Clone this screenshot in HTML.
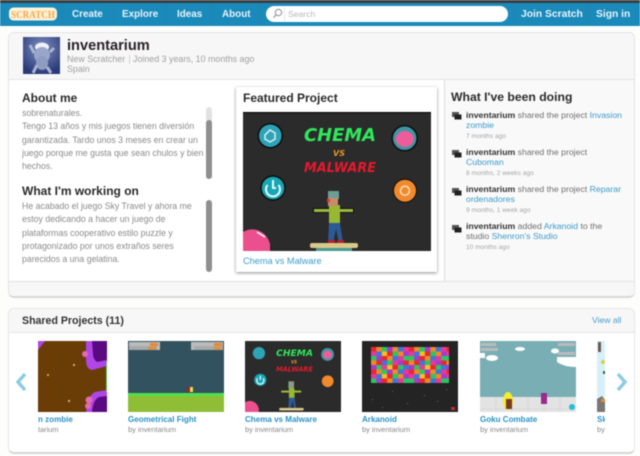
<!DOCTYPE html>
<html><head><meta charset="utf-8"><title>inventarium on Scratch</title>
<style>
html,body{margin:0;padding:0;width:640px;height:456px;overflow:hidden;background:#fdfdfb}
#r{position:absolute;left:0;top:0;width:640px;height:456px;overflow:hidden;font-family:"Liberation Sans",sans-serif;filter:blur(.45px);color:#777}
#r div,#r span.a,#r svg{position:absolute}
.t{white-space:nowrap;position:absolute}
.n{color:#e8f3f9;font-weight:bold;font-size:9.9px;top:8px;line-height:13px}
.h{color:#2a2a2a;font-weight:bold;font-size:12px;line-height:14px}
.b{font-size:8.75px;color:#8a8a8a;line-height:13px}
a{color:#3d9ccb;text-decoration:none}
.act{left:466px;width:165px;font-size:8.7px;line-height:10.4px;color:#6f6f6f;white-space:normal}
.act b{color:#333}
.act small{display:block;font-size:6.6px;color:#a5a5a5;line-height:11px}
.tt{font-weight:bold;font-size:8.05px;color:#2a93c4;line-height:10px;top:415px}
.by{font-size:7.4px;color:#888;line-height:9px;top:425px}
.sep{width:1px;background:#2484ae;top:3px;height:22px}
</style></head><body><div id="r">

<div style="left:0;top:0;width:640px;height:3px;background:#3a3d40"></div>
<div style="left:0;top:3px;width:640px;height:23px;background:#1a8abb"></div>
<div class="sep" style="left:62px"></div><div class="sep" style="left:112px"></div><div class="sep" style="left:166px"></div><div class="sep" style="left:211px"></div><div class="sep" style="left:259px"></div><div class="sep" style="left:514px"></div><div class="sep" style="left:588px"></div>

<svg style="left:8px;top:6px" width="50" height="16" viewBox="0 0 50 16">
<rect x="1" y="1.5" width="48" height="13" rx="4.5" fill="#fff2d8"/>
<text x="3" y="12" font-family="Liberation Serif,serif" font-weight="bold" font-size="10.5" fill="#f3a64a" textLength="44" lengthAdjust="spacingAndGlyphs">SCRATCH</text>
</svg>

<span class="t n" style="left:72px">Create</span>
<span class="t n" style="left:122px">Explore</span>
<span class="t n" style="left:177px">Ideas</span>
<span class="t n" style="left:222px">About</span>

<div style="left:266px;top:6px;width:242px;height:16px;background:#fff;border-radius:8px"></div>
<div style="left:284px;top:7px;width:1px;height:14px;background:#e6e6e6"></div>
<svg style="left:272px;top:8px" width="11" height="11" viewBox="0 0 11 11"><circle cx="6.5" cy="4.5" r="3.2" fill="none" stroke="#999" stroke-width="1.1"/><path d="M4.2 6.8L1.5 9.6" stroke="#999" stroke-width="1.3"/></svg>
<span class="t" style="left:288px;top:8px;font-size:8.6px;line-height:12px;color:#b8b8b8">Search</span>

<span class="t n" style="left:521px;font-size:10.3px">Join Scratch</span>
<span class="t n" style="left:596px;font-size:10.3px">Sign in</span>

<!-- profile card -->
<div style="left:8px;top:32px;width:625px;height:263px;background:#fff;border:1px solid #e4e4e4;border-bottom:2px solid #d8d8d8;border-radius:6px;overflow:hidden">
  <div style="left:0;top:0;width:625px;height:46px;background:#f7f7f7;border-bottom:1px solid #e4e4e4"></div>
  <div style="left:435px;top:47px;width:190px;height:201px;background:#f9f9f9;border-left:1px solid #dedede"></div>
  <div style="left:0;top:248px;width:625px;height:15px;background:#f7f7f7;border-top:1px solid #e2e2e2"></div>
</div>

<svg style="left:23px;top:37px" width="37" height="37" viewBox="0 0 37 37">
<defs><radialGradient id="g" cx=".5" cy=".3" r=".7"><stop offset="0" stop-color="#7f8fc2"/><stop offset="1" stop-color="#2a3a78"/></radialGradient></defs>
<rect width="37" height="37" fill="url(#g)"/>
<ellipse cx="19" cy="10" rx="7" ry="4.5" fill="#eef1f9"/>
<ellipse cx="19" cy="18" rx="8" ry="8" fill="#9aa5ca"/>
<ellipse cx="19" cy="26" rx="6" ry="7" fill="#8f9cc2"/>
<path d="M11 16L7 8M27 15L31 11M14 28L10 36M24 30L28 36" stroke="#aab5d3" stroke-width="3"/>
</svg>

<span class="t" style="left:67px;top:37px;font-weight:bold;font-size:14.6px;line-height:18px;color:#2a2228">inventarium</span>
<span class="t" style="left:67px;top:54px;font-size:8.9px;line-height:11px;color:#a0a0a0">New Scratcher</span>
<div style="left:129px;top:55px;width:1px;height:9px;background:#d8d8d8"></div>
<span class="t" style="left:133px;top:54px;font-size:8.9px;line-height:11px;color:#a0a0a0">Joined 3 years, 10 months ago</span>
<span class="t" style="left:67px;top:64px;font-size:8.9px;line-height:11px;color:#a0a0a0">Spain</span>

<!-- about -->
<span class="t h" style="left:22px;top:91px">About me</span>
<span class="t b" style="left:22px;top:107px">sobrenaturales.</span>
<span class="t b" style="left:22px;top:120px">Tengo 13 años y mis juegos tienen diversión</span>
<span class="t b" style="left:22px;top:134px">garantizada. Tardo unos 3 meses en crear un</span>
<span class="t b" style="left:22px;top:147px">juego porque me gusta que sean chulos y bien</span>
<span class="t b" style="left:22px;top:160px">hechos.</span>
<div style="left:206px;top:107px;width:6px;height:72px;background:#e2e2e2;border-radius:3px"></div>
<div style="left:206px;top:120px;width:6px;height:59px;background:#8f8f8f;border-radius:3px"></div>

<span class="t h" style="left:22px;top:184px">What I'm working on</span>
<span class="t b" style="left:22px;top:200px">He acabado el juego Sky Travel y ahora me</span>
<span class="t b" style="left:22px;top:213px">estoy dedicando a hacer un juego de</span>
<span class="t b" style="left:22px;top:227px">plataformas cooperativo estilo puzzle y</span>
<span class="t b" style="left:22px;top:240px">protagonizado por unos extraños seres</span>
<span class="t b" style="left:22px;top:253px">parecidos a una gelatina.</span>
<div style="left:206px;top:200px;width:6px;height:72px;background:#8f8f8f;border-radius:3px"></div>

<!-- featured -->
<div style="left:236px;top:87px;width:201px;height:185px;background:#fff;box-shadow:0 1px 3px rgba(0,0,0,.45)"></div>
<span class="t h" style="left:243px;top:91px">Featured Project</span>
<svg style="left:243px;top:112px" width="188" height="139" viewBox="0 0 188 139">
<rect width="188" height="139" fill="#2b2b2b"/>
<rect width="188" height="1" fill="#000"/>
<circle cx="27.3" cy="23.7" r="12" fill="#2ea3b5" stroke="#0d0d0d" stroke-width="1.5"/><path d="M22 23l5-5 5 3v6l-5 3-5-3z" fill="none" stroke="#cfeef2" stroke-width="1.6"/>
<circle cx="161.7" cy="26.3" r="12.5" fill="#3d97a3" stroke="#0d0d0d" stroke-width="1.5"/><ellipse cx="161.7" cy="27" rx="9" ry="8" fill="#ee5d9a"/>
<circle cx="30" cy="76" r="12" fill="#18a6b5" stroke="#0d0d0d" stroke-width="1.5"/><path d="M24.5 73a7 7 0 1 0 11 0M30 68v8h3" fill="none" stroke="#e8fbfd" stroke-width="2"/>
<circle cx="162" cy="78.7" r="11.5" fill="#f08a2c" stroke="#0d0d0d" stroke-width="1"/><circle cx="162" cy="78.7" r="4.5" fill="none" stroke="#fbd9b5" stroke-width="1.6"/>
<text x="61" y="29" font-family="DejaVu Sans,sans-serif" font-weight="bold" font-style="italic" font-size="17.5" fill="#2fe85d" textLength="72" lengthAdjust="spacingAndGlyphs">CHEMA</text>
<text x="96" y="44" text-anchor="middle" font-family="DejaVu Sans,sans-serif" font-weight="bold" font-style="italic" font-size="8" fill="#e8962c">VS</text>
<text x="61" y="60" font-family="DejaVu Sans,sans-serif" font-weight="bold" font-style="italic" font-size="13" fill="#e8182c" textLength="72" lengthAdjust="spacingAndGlyphs">MALWARE</text>
<path d="M0 139v-19q7-4 14-2q10 3 13 14v7z" fill="#ec4f8e"/>
<path d="M14 120l8 5" stroke="#fff" stroke-width="1.5"/>
<rect x="70" y="96" width="41" height="5" fill="#111"/><rect x="71" y="97" width="39" height="3" fill="#9bb93e"/>
<rect x="86" y="93" width="11" height="19" fill="#98b733"/>
<rect x="85" y="79" width="11" height="8" fill="#6d9d94"/><rect x="85" y="86" width="10" height="8" fill="#c98a6a"/><rect x="84" y="87" width="3" height="3" fill="#d2402c"/>
<path d="M86 111h11l3 20h-4l-3-14-3 14h-5z" fill="#2c5a96"/>
<rect x="85" y="128" width="7" height="4" fill="#b51e2c"/><rect x="94" y="128" width="7" height="4" fill="#b51e2c"/>
<rect x="67" y="131" width="48" height="5" rx="2" fill="#d9c888"/>
<rect x="73" y="136" width="36" height="3" fill="#4a9a92"/>
</svg>
<span class="t" style="left:243px;top:255px;font-size:9.2px;line-height:12px;color:#3d9ccb">Chema vs Malware</span>

<!-- activity -->
<span class="t" style="left:451px;top:90px;font-weight:bold;font-size:12.2px;line-height:15px;color:#2a2a2a">What I've been doing</span>
<svg style="left:452px;top:112px" width="10" height="8" viewBox="0 0 10 8"><rect x="0" y="0" width="7" height="5" fill="#555"/><rect x="2.5" y="2.5" width="7" height="5" fill="#222"/></svg>
<svg style="left:452px;top:150px" width="10" height="8" viewBox="0 0 10 8"><rect x="0" y="0" width="7" height="5" fill="#555"/><rect x="2.5" y="2.5" width="7" height="5" fill="#222"/></svg>
<svg style="left:452px;top:188px" width="10" height="8" viewBox="0 0 10 8"><rect x="0" y="0" width="7" height="5" fill="#555"/><rect x="2.5" y="2.5" width="7" height="5" fill="#222"/></svg>
<svg style="left:452px;top:225px" width="10" height="8" viewBox="0 0 10 8"><rect x="0" y="0" width="7" height="5" fill="#555"/><rect x="2.5" y="2.5" width="7" height="5" fill="#222"/></svg>
<div class="act" style="top:110px"><b>inventarium</b> shared the project <a>Invasion zombie</a><small>7 months ago</small></div>
<div class="act" style="top:147px"><b>inventarium</b> shared the project<br><a>Cuboman</a><small>8 months, 2 weeks ago</small></div>
<div class="act" style="top:184px"><b>inventarium</b> shared the project <a>Reparar ordenadores</a><small>9 months, 1 week ago</small></div>
<div class="act" style="top:221px"><b>inventarium</b> added <a>Arkanoid</a> to the<br>studio <a>Shenron's Studio</a><small>10 months ago</small></div>

<!-- shared card -->
<div style="left:8px;top:308px;width:625px;height:143px;background:#fff;border:1px solid #e6e6e6;border-bottom:2px solid #d6d6d6;border-radius:6px;overflow:hidden">
 <div style="left:0;top:0;width:625px;height:23px;background:#f7f7f7;border-bottom:1px solid #e4e4e4"></div>
</div>
<span class="t h" style="left:22px;top:314px;font-size:10.6px;color:#333">Shared Projects (11)</span>
<span class="t" style="left:592px;top:314px;font-size:8.6px;line-height:13px;color:#4a9fc8">View all</span>

<svg style="left:15px;top:372px" width="13" height="20" viewBox="0 0 13 20"><path d="M10 2L3 10l7 8" fill="none" stroke="#8ccbe6" stroke-width="3.4"/></svg>
<svg style="left:615px;top:372px" width="13" height="20" viewBox="0 0 13 20"><path d="M3 2l7 8-7 8" fill="none" stroke="#8ccbe6" stroke-width="3.4"/></svg>

<!-- thumb 1 -->
<svg style="left:38px;top:341px" width="69" height="71" viewBox="0 0 69 71">
<rect width="69" height="71" fill="#6a3c06"/>
<path d="M48 0h21v25l-15 4q-6-1-6-10z" fill="#b045e8"/><path d="M54 0h15v19l-10 2q-4-3-4-8z" fill="#5a0a80"/>
<path d="M0 0h7l-7 9z" fill="#b045e8"/>
<path d="M69 49l-12 2q-7 3-9 20h21z" fill="#b045e8"/><path d="M69 55l-8 1q-6 3-7 15h15z" fill="#5a0a80"/>
<circle cx="47" cy="13" r="3" fill="#e56bb0"/><circle cx="51" cy="59" r="3.5" fill="#e56bb0"/><circle cx="50" cy="65" r="3" fill="#e56bb0"/>
<rect x="35" y="23" width="2" height="2" fill="#d8a090"/><rect x="9" y="33" width="2" height="2" fill="#d8a040"/><rect x="30" y="59" width="2" height="2" fill="#e0a890"/>
<rect x="68" y="21" width="1" height="30" fill="#49d060"/>
</svg>
<span class="t tt" style="left:38px">n zombie</span>
<span class="t by" style="left:38px">tarium</span>

<!-- thumb 2 -->
<svg style="left:128px;top:341px" width="96" height="71" viewBox="0 0 96 71">
<rect width="96" height="71" fill="#33525f"/>
<rect y="52" width="96" height="19" fill="#8fbe36"/><rect y="52" width="96" height="3" fill="#4fe04f"/>
<rect x="1" y="1" width="31" height="8" fill="#bbb"/><rect x="22" y="2" width="8" height="3" fill="#e88a2c"/><rect x="1" y="5" width="28" height="4" fill="#aaa"/><rect x="20" y="6" width="8" height="2.5" fill="#e88a2c"/>
<rect x="63" y="1" width="32" height="8" fill="#bbb"/><rect x="86" y="2" width="8" height="3" fill="#e88a2c"/><rect x="66" y="5" width="29" height="4" fill="#aaa"/><rect x="86" y="6" width="7" height="2.5" fill="#e88a2c"/>
<rect x="59" y="46" width="3" height="5" fill="#a02030"/><rect x="62" y="46" width="3" height="5" fill="#e8e040"/>
</svg>
<span class="t tt" style="left:128px">Geometrical Fight</span>
<span class="t by" style="left:128px">by inventarium</span>

<!-- thumb 3 -->
<svg style="left:245px;top:341px" width="96" height="71" viewBox="0 0 188 139">
<rect width="188" height="139" fill="#2b2b2b"/>
<circle cx="27.3" cy="23.7" r="12" fill="#2ea3b5"/>
<circle cx="161.7" cy="26.3" r="12.5" fill="#3d97a3"/><ellipse cx="161.7" cy="27" rx="9" ry="8" fill="#ee5d9a"/>
<circle cx="30" cy="76" r="12" fill="#18a6b5"/><path d="M24.5 73a7 7 0 1 0 11 0M30 68v8" fill="none" stroke="#e8fbfd" stroke-width="2.4"/>
<circle cx="162" cy="78.7" r="11.5" fill="#f08a2c"/>
<text x="61" y="29" font-family="DejaVu Sans,sans-serif" font-weight="bold" font-style="italic" font-size="17.5" fill="#2fe85d" textLength="72" lengthAdjust="spacingAndGlyphs">CHEMA</text>
<text x="96" y="44" text-anchor="middle" font-family="DejaVu Sans,sans-serif" font-weight="bold" font-style="italic" font-size="8" fill="#e8962c">VS</text>
<text x="61" y="60" font-family="DejaVu Sans,sans-serif" font-weight="bold" font-style="italic" font-size="13" fill="#e8182c" textLength="72" lengthAdjust="spacingAndGlyphs">MALWARE</text>
<path d="M0 139v-19q7-4 14-2q10 3 13 14v7z" fill="#ec4f8e"/>
<rect x="71" y="97" width="39" height="4" fill="#9bb93e"/><rect x="86" y="93" width="11" height="19" fill="#98b733"/>
<rect x="85" y="79" width="11" height="14" fill="#8a9d84"/>
<path d="M86 111h11l3 20h-4l-3-14-3 14h-5z" fill="#2c5a96"/>
<rect x="67" y="131" width="48" height="5" rx="2" fill="#d9c888"/>
</svg>
<span class="t tt" style="left:245px">Chema vs Malware</span>
<span class="t by" style="left:245px">by inventarium</span>

<!-- thumb 4 -->
<svg style="left:362px;top:341px" width="96" height="71" viewBox="0 0 96 71">
<defs><pattern id="br" x="9" y="6" width="37.8" height="22.5" patternUnits="userSpaceOnUse">
<rect width="37.8" height="22.5" fill="#e83040"/>
<rect x="0" y="0" width="5.4" height="4.5" fill="#e8282c"/><rect x="5.4" y="0" width="5.4" height="4.5" fill="#f08a28"/><rect x="10.8" y="0" width="5.4" height="4.5" fill="#28c860"/><rect x="16.2" y="0" width="5.4" height="4.5" fill="#a838d0"/><rect x="21.6" y="0" width="5.4" height="4.5" fill="#f08a28"/><rect x="27" y="0" width="5.4" height="4.5" fill="#3878e0"/><rect x="32.4" y="0" width="5.4" height="4.5" fill="#e83898"/>
<rect x="0" y="4.5" width="5.4" height="4.5" fill="#e83898"/><rect x="5.4" y="4.5" width="5.4" height="4.5" fill="#3878e0"/><rect x="10.8" y="4.5" width="5.4" height="4.5" fill="#f0c028"/><rect x="16.2" y="4.5" width="5.4" height="4.5" fill="#e8282c"/><rect x="21.6" y="4.5" width="5.4" height="4.5" fill="#28c860"/><rect x="27" y="4.5" width="5.4" height="4.5" fill="#f08a28"/><rect x="32.4" y="4.5" width="5.4" height="4.5" fill="#a838d0"/>
<rect x="0" y="9" width="5.4" height="4.5" fill="#28c860"/><rect x="5.4" y="9" width="5.4" height="4.5" fill="#a838d0"/><rect x="10.8" y="9" width="5.4" height="4.5" fill="#e8282c"/><rect x="16.2" y="9" width="5.4" height="4.5" fill="#f08a28"/><rect x="21.6" y="9" width="5.4" height="4.5" fill="#3878e0"/><rect x="27" y="9" width="5.4" height="4.5" fill="#e83898"/><rect x="32.4" y="9" width="5.4" height="4.5" fill="#28c860"/>
<rect x="0" y="13.5" width="5.4" height="4.5" fill="#f08a28"/><rect x="5.4" y="13.5" width="5.4" height="4.5" fill="#e8282c"/><rect x="10.8" y="13.5" width="5.4" height="4.5" fill="#3878e0"/><rect x="16.2" y="13.5" width="5.4" height="4.5" fill="#28c860"/><rect x="21.6" y="13.5" width="5.4" height="4.5" fill="#e83898"/><rect x="27" y="13.5" width="5.4" height="4.5" fill="#a838d0"/><rect x="32.4" y="13.5" width="5.4" height="4.5" fill="#e8282c"/>
<rect x="0" y="18" width="5.4" height="4.5" fill="#a838d0"/><rect x="5.4" y="18" width="5.4" height="4.5" fill="#28c860"/><rect x="10.8" y="18" width="5.4" height="4.5" fill="#e83898"/><rect x="16.2" y="18" width="5.4" height="4.5" fill="#f0c028"/><rect x="21.6" y="18" width="5.4" height="4.5" fill="#e8282c"/><rect x="27" y="18" width="5.4" height="4.5" fill="#28c860"/><rect x="32.4" y="18" width="5.4" height="4.5" fill="#3878e0"/>
</pattern></defs>
<rect width="96" height="71" fill="#242424"/>
<rect x="9" y="6" width="78" height="36" fill="url(#br)"/>
<rect x="89" y="66" width="4" height="3" fill="#c03030"/>
<g fill="#666"><rect x="10" y="58" width="1" height="1"/><rect x="30" y="50" width="1" height="1"/><rect x="45" y="62" width="1" height="1"/><rect x="62" y="54" width="1" height="1"/><rect x="75" y="60" width="1" height="1"/><rect x="20" y="66" width="1" height="1"/><rect x="84" y="48" width="1" height="1"/></g>
</svg>
<span class="t tt" style="left:362px">Arkanoid</span>
<span class="t by" style="left:362px">by inventarium</span>

<!-- thumb 5 -->
<svg style="left:480px;top:341px" width="96" height="71" viewBox="0 0 96 71">
<rect width="96" height="71" fill="#78aeb4"/>
<rect y="56" width="96" height="15" fill="#e3e3e3"/>
<path d="M0 68h96M16 56v15M32 56v15M48 56v15M64 56v15M80 56v15" stroke="#cfcfcf" stroke-width=".6"/>
<ellipse cx="40" cy="8" rx="5" ry="2" fill="#fff"/><ellipse cx="12" cy="17" rx="6" ry="3" fill="#fff"/><ellipse cx="75" cy="10" rx="4" ry="2.5" fill="#fff"/><path d="M77 16h19v10q-12 0-19-5z" fill="#fff"/><path d="M0 12h5v5H0z" fill="#fff"/>
<rect x="1" y="2" width="15" height="3" fill="#bbb"/><rect x="1" y="7" width="17" height="3" fill="#bbb"/><rect x="78" y="2" width="17" height="3" fill="#bbb"/><rect x="78" y="11" width="17" height="3" fill="#bbb"/>
<ellipse cx="28" cy="60" rx="5" ry="9" fill="#f4ec30"/><rect x="26" y="58" width="6" height="10" fill="#7a3a22"/>
<rect x="61" y="52" width="6" height="11" fill="#9a2a8e"/>
<circle cx="92" cy="66" r="3" fill="#20c0d8"/>
</svg>
<span class="t tt" style="left:480px">Goku Combate</span>
<span class="t by" style="left:480px">by inventarium</span>

<!-- thumb 6 -->
<svg style="left:597px;top:341px" width="8" height="71" viewBox="0 0 8 71">
<rect width="8" height="71" fill="#d6f0fa"/>
<rect x="1" y="1" width="3" height="10" fill="#6a5a50"/>
<circle cx="6" cy="21" r="2" fill="#d8d040"/><rect x="6" y="30" width="2" height="3" fill="#4a6030"/>
<path d="M0 71V58l5-3 3 4v12z" fill="#777"/><rect x="4" y="58" width="4" height="3" fill="#e88a2c"/>
</svg>
<span class="t tt" style="left:597px;width:8px;overflow:hidden">Sky Travel</span>
<span class="t by" style="left:597px;width:8px;overflow:hidden">by inventarium</span>

</div></body></html>
